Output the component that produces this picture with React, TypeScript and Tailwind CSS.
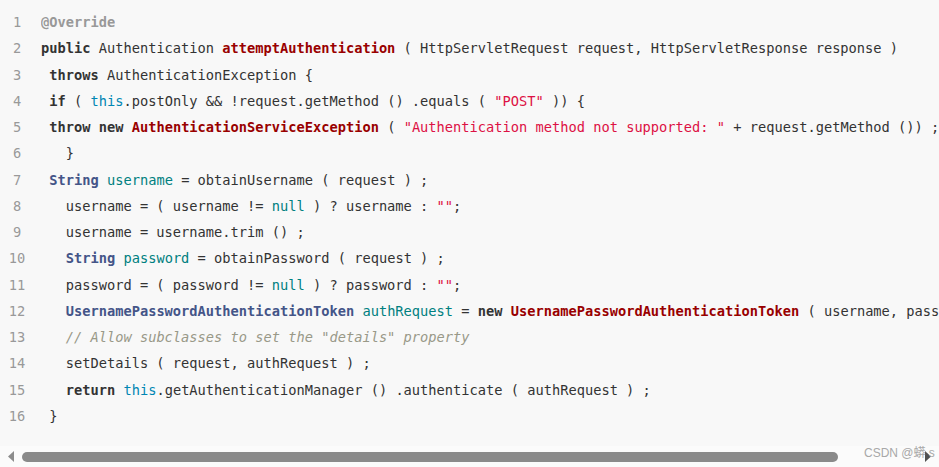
import React from "react";

type Tok = [string, string];

const K = "font-bold text-[#333333]";
const META = "font-bold text-[#999999]";
const TITLE = "font-bold text-[#990000]";
const TYPE = "font-bold text-[#445588]";
const VAR = "text-[#008080]";
const LIT = "text-[#008080]";
const BUILTIN = "text-[#0086b3]";
const STR = "text-[#dd1144]";
const COM = "italic text-[#999988]";
const P = "";

const lines: Tok[][] = [
  [[META, "@Override"]],
  [[K, "public"], [P, " Authentication "], [TITLE, "attemptAuthentication"], [P, " ( HttpServletRequest request, HttpServletResponse response )"]],
  [[P, " "], [K, "throws"], [P, " AuthenticationException {"]],
  [[P, " "], [K, "if"], [P, " ( "], [BUILTIN, "this"], [P, ".postOnly && !request.getMethod () .equals ( "], [STR, "\"POST\""], [P, " )) {"]],
  [[P, " "], [K, "throw"], [P, " "], [K, "new"], [P, " "], [TITLE, "AuthenticationServiceException"], [P, " ( "], [STR, "\"Authentication method not supported: \""], [P, " + request.getMethod ()) ;"]],
  [[P, "   }"]],
  [[P, " "], [TYPE, "String"], [P, " "], [VAR, "username"], [P, " = obtainUsername ( request ) ;"]],
  [[P, "   username = ( username != "], [LIT, "null"], [P, " ) ? username : "], [STR, "\"\""], [P, ";"]],
  [[P, "   username = username.trim () ;"]],
  [[P, "   "], [TYPE, "String"], [P, " "], [VAR, "password"], [P, " = obtainPassword ( request ) ;"]],
  [[P, "   password = ( password != "], [LIT, "null"], [P, " ) ? password : "], [STR, "\"\""], [P, ";"]],
  [[P, "   "], [TYPE, "UsernamePasswordAuthenticationToken"], [P, " "], [VAR, "authRequest"], [P, " = "], [K, "new"], [P, " "], [TITLE, "UsernamePasswordAuthenticationToken"], [P, " ( username, password ) ;"]],
  [[P, "   "], [COM, "// Allow subclasses to set the \"details\" property"]],
  [[P, "   setDetails ( request, authRequest ) ;"]],
  [[P, "   "], [K, "return"], [P, " "], [BUILTIN, "this"], [P, ".getAuthenticationManager () .authenticate ( authRequest ) ;"]],
  [[P, " }"]],
];

const mono = { fontFamily: '"DejaVu Sans Mono", "Liberation Mono", monospace' };

export default function App() {
  return (
    <div className="relative w-[939px] h-[467px] overflow-hidden bg-[#f8f8f8]">
      <div className="flex flex-col pt-[9px] h-[446px]" style={mono}>
        {lines.map((toks, i) => (
          <div key={i} className="flex h-[26.25px] items-center text-[13.7px] leading-[26.25px]">
            <div className="w-[34px] shrink-0 text-center text-[#999999]">{i + 1}</div>
            <div className="ml-[7px] whitespace-pre text-[#333333] overflow-hidden">
              {toks.map(([c, t], j) => (
                <span key={j} className={c}>{t}</span>
              ))}
            </div>
          </div>
        ))}
      </div>
      <div className="flex h-[21px] items-center bg-[#fbfbfb]">
        <div className="w-[22px] flex items-center justify-center">
          <svg width="8" height="11" viewBox="0 0 8 11">
            <polygon points="7,0 7,11 1,5.5" fill="#8c8c8c" />
          </svg>
        </div>
        <div className="w-[816px] h-[10px] rounded-full bg-[#8a8a8a]"></div>
        <div className="flex-1"></div>
        <div className="w-[22px] flex items-center justify-center">
          <svg width="8" height="11" viewBox="0 0 8 11">
            <polygon points="1,0 1,11 7,5.5" fill="#505050" />
          </svg>
        </div>
      </div>
      <div
        className="absolute left-[864px] top-[444px] text-[12px] text-[#a8a8a8] whitespace-pre"
        style={{ fontFamily: '"Liberation Sans", "Noto Sans CJK SC", sans-serif' }}
      >
        CSDN @蟒 s
      </div>
    </div>
  );
}
